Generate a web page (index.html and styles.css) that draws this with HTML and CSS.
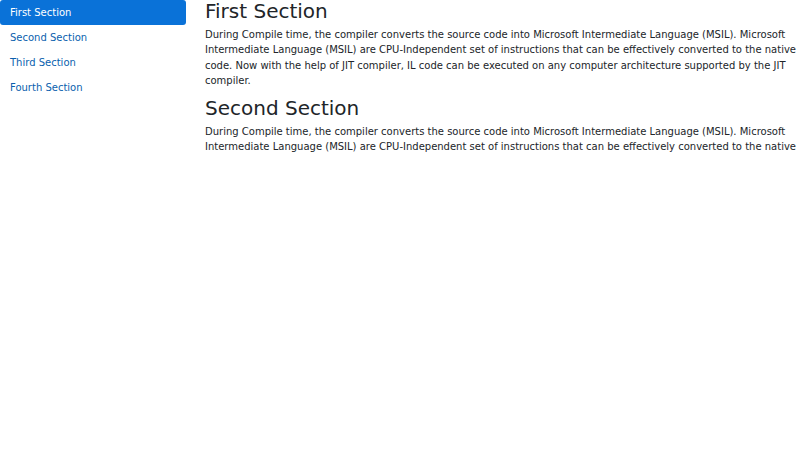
FILE: index.html
```html
<!DOCTYPE html>
<html>
<head>
<meta charset="utf-8">
<link rel="stylesheet" href="styles.css">
</head>
<body>
<div class="layout">
  <nav class="nav">
    <a class="nav-link active" href="#s1">First Section</a>
    <a class="nav-link" href="#s2">Second Section</a>
    <a class="nav-link" href="#s3">Third Section</a>
    <a class="nav-link" href="#s4">Fourth Section</a>
  </nav>
  <main class="content">
    <section>
      <h4>First Section</h4>
      <p>During Compile time, the compiler converts the source code into Microsoft Intermediate Language (MSIL). Microsoft Intermediate Language (MSIL) are CPU-Independent set of instructions that can be effectively converted to the native code. Now with the help of JIT compiler, IL code can be executed on any computer architecture supported by the JIT compiler.</p>
    </section>
    <section>
      <h4>Second Section</h4>
      <p>During Compile time, the compiler converts the source code into Microsoft Intermediate Language (MSIL). Microsoft Intermediate Language (MSIL) are CPU-Independent set of instructions that can be effectively converted to the native</p>
    </section>
  </main>
</div>
</body>
</html>
```
FILE: styles.css
```css
html, body {
  margin: 0;
  padding: 0;
  background: #fff;
}
body {
  font-family: "DejaVu Sans", sans-serif;
  font-size: 10px;
  line-height: 15.4px;
  color: #212529;
}
.layout {
  display: grid;
  grid-template-columns: 186px 1fr;
  column-gap: 19px;
}
.nav {
  display: flex;
  flex-direction: column;
}
.nav-link {
  display: block;
  padding: 5px 10px;
  line-height: 15px;
  font-size: 10px;
  color: #0a5fae;
  text-decoration: none;
  border-radius: 3px;
}
.nav-link.active {
  background: #0a72d8;
  color: #fff;
}
.content {
  min-width: 0;
}
h4 {
  margin: -1px 0 4px;
  font-size: 20px;
  font-weight: 400;
  line-height: 24px;
}
p {
  margin: 0 0 8px;
}
```
